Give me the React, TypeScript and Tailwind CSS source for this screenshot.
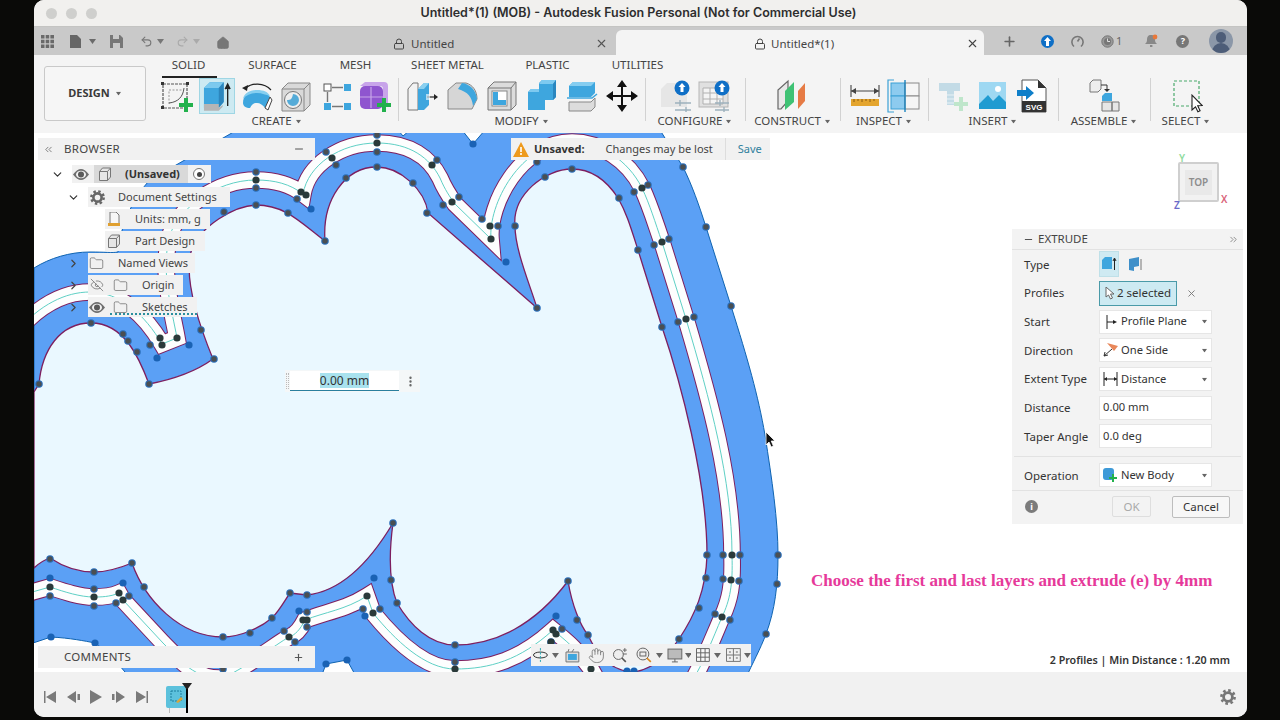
import { ReactNode } from "react";
import {
  ChevronDown,
  ChevronRight,
  ChevronsLeft,
  ChevronsRight,
  EyeOff,
  Folder,
  Hand,
  Home,
  Lock,
  Minus,
  MoreVertical,
  Plus,
  Redo2,
  Undo2,
  X,
} from "lucide-react";

const UI_FONT = "font-['Noto_Sans',sans-serif]";

function Caret({ className = "" }: { className?: string }) {
  return (
    <svg width="7" height="5" viewBox="0 0 7 5" className={className}>
      <path d="M0 0h7L3.5 5z" fill="currentColor" />
    </svg>
  );
}

function Ico({ children, w = 34 }: { children: ReactNode; w?: number }) {
  return (
    <svg width={w} height="34" viewBox={`0 0 ${w} 34`}>
      {children}
    </svg>
  );
}

function Gear({ size = 16, color = "#777", className = "" }: { size?: number; color?: string; className?: string }) {
  return (
    <svg width={size} height={size} viewBox="0 0 16 16" fill="none" stroke={color} className={className}>
      <circle cx="8" cy="8" r="4.4" strokeWidth="2.8" />
      <circle cx="8" cy="8" r="6.6" strokeWidth="2.6" strokeDasharray="2.6 2.58" />
    </svg>
  );
}

function EyeOpen({ className = "" }: { className?: string }) {
  return (
    <svg width="16" height="11" viewBox="0 0 16 11" className={className}>
      <path d="M0 5.5C3 1.5 5.5 0 8 0s5 1.5 8 5.5C13 9.500 10.500 11 8 11S3 9.500 0 5.500z" fill="#6e6e6e" />
      <ellipse cx="8" cy="5.500" rx="5" ry="3.800" fill="#f1f1f1" />
      <circle cx="8" cy="5.500" r="3" fill="#5a5a5a" />
    </svg>
  );
}

const greenPlus = (x: number, y: number, fill = "#22b14c") => (
  <path d={`M${x - 2} ${y - 7}h4v5h5v4h-5v5h-4v-5h-5v-4h5z`} fill={fill} />
);

const badge = (x: number, y: number) => (
  <g>
    <circle cx={x} cy={y} r="7.5" fill="#0f6fc6" />
    <path d={`M${x} ${y - 5}l3.5 4h-2v5h-3v-5h-2z`} fill="#fff" />
  </g>
);

const icons: Record<string, ReactNode> = {
  sketch: (
    <Ico>
      <rect x="2" y="5" width="24" height="24" fill="none" stroke="#555" strokeWidth="1.2" strokeDasharray="3 1" />
      <path d="M8 25V11h13" fill="none" stroke="#999" strokeDasharray="2 1.5" />
      <path d="M8 24c9-1 14-6 15-15" fill="none" stroke="#555" />
      <rect x="0" y="3" width="3" height="3" fill="#333" />
      <rect x="25" y="3" width="3" height="3" fill="#333" />
      <rect x="0" y="27" width="3" height="3" fill="#333" />
      {greenPlus(25, 26)}
    </Ico>
  ),
  extrude: (
    <Ico>
      <path d="M4 9l6-6h14v20l-5 6H4z" fill="#3ea6de" />
      <path d="M4 9l6-6h14l-5 6z" fill="#7cc9ee" />
      <path d="M19 9l5-6v20l-5 6z" fill="#2c86bd" />
      <path d="M4 25h15v4l4-3v2l-4 4H4z" fill="#b5b5b5" />
      <path d="M28 27V7M25.500 10L28 5l2.500 5" stroke="#222" strokeWidth="1.4" fill="#222" />
    </Ico>
  ),
  revolve: (
    <Ico>
      <path d="M3 24c0-8 6-12 14-12s11 3 13 6l-5 11c-2-3-5-5-8-5-3 0-5 1-7 5-4 0-7-2-7-5z" fill="#3ea6de" />
      <path d="M3 20c1-6 7-9 14-9s11 2 13 6c-4-1-8-3-13-3-6 0-11 2-14 6z" fill="#86cff0" />
      <path d="M25 29l5-11 2 3-4 10z" fill="#fff" stroke="#444" />
      <path d="M6 9c5-5 18-6 25 2" fill="none" stroke="#222" strokeWidth="1.2" />
      <path d="M2 9l6-3-1 6z" fill="#222" />
    </Ico>
  ),
  hole: (
    <Ico>
      <path d="M3 10l6-6h22v22l-6 6H3z" fill="#d9d9d9" stroke="#888" />
      <path d="M3 10h22v22M25 10l6-6" fill="none" stroke="#888" />
      <circle cx="14" cy="21" r="8.500" fill="#eee" stroke="#777" />
      <path d="M8 21a6 6 0 1 0 6-6c-1 5-2 6-6 6z" fill="#54abd8" />
    </Ico>
  ),
  pattern: (
    <Ico>
      <rect x="5" y="5" width="7" height="7" fill="#fff" stroke="#555" />
      <rect x="25" y="5" width="7" height="7" fill="#3ea6de" />
      <rect x="5" y="24" width="7" height="7" fill="#3ea6de" />
      <rect x="25" y="24" width="7" height="7" fill="#3ea6de" />
      <path d="M13 8.500h11M8.500 13v10M13 27.500h11" stroke="#777" strokeWidth="1.4" />
    </Ico>
  ),
  form: (
    <Ico>
      <rect x="2" y="7" width="23" height="23" rx="5" fill="#8f55cf" />
      <path d="M7 3h19a4 4 0 0 1 4 4v17l-5 3V10a3 3 0 0 0-3-3H2z" fill="#c8a4ea" />
      <path d="M2 18h23M13 8v21" stroke="#c7a6e8" strokeWidth="1.2" />
      {greenPlus(26, 26)}
    </Ico>
  ),
  press: (
    <Ico>
      <path d="M3 10l5-6h5v27H3z" fill="#f2f2f2" stroke="#777" />
      <path d="M13 10l6-6h5v22l-5 5h-6z" fill="#3ea6de" />
      <path d="M13 10l6-6h5l-5 6z" fill="#8ad0f0" />
      <path d="M22 18h9" stroke="#222" strokeWidth="1.2" />
      <path d="M29 15l4 3-4 3z" fill="#222" />
      <path d="M21 15h4v6h-4z" fill="#fff" opacity=".6" />
    </Ico>
  ),
  fillet: (
    <Ico>
      <path d="M3 11l8-7h10c7 2 11 8 11 16l-5 10H3z" fill="#d6d6d6" stroke="#888" />
      <path d="M17 4c8 1 14 7 15 16l-4 7c-1-9-5-14-15-17z" fill="#3ea6de" />
    </Ico>
  ),
  shell: (
    <Ico>
      <path d="M3 9l6-6h22v23l-5 5H3z" fill="#dcdcdc" stroke="#777" />
      <path d="M3 9h23v22M26 9l5-6" fill="none" stroke="#777" />
      <rect x="7" y="12" width="15" height="15" fill="#fff" stroke="#888" />
      <path d="M8 13h5v8h8v5H8z" fill="#3ea6de" />
    </Ico>
  ),
  combine: (
    <Ico>
      <path d="M14 4l3-3h14v17l-3 3h-8v10H3V13l3-3h8z" fill="#3ea6de" />
      <path d="M17 1h14l-3 4H14zM3 13l3-3h8v3z" fill="#7ecaf0" />
      <path d="M28 5l3-4v17l-3 3z" fill="#2a86bf" />
    </Ico>
  ),
  split: (
    <Ico>
      <path d="M4 7l4-4h22v11l-4 4H4z" fill="#3ea6de" />
      <path d="M4 7l4-4h22l-4 4z" fill="#85cdf0" />
      <path d="M4 23h22l4-4v9l-4 4H4z" fill="#dcdcdc" stroke="#888" />
      <path d="M2 19h25l5-4" fill="none" stroke="#3ea6de" strokeWidth="1.6" />
    </Ico>
  ),
  move: (
    <Ico>
      <path d="M17 4v26M4 17h26" stroke="#111" strokeWidth="2" />
      <path d="M17 1l5 7H12zM17 33l-5-7h10zM1 17l7-5v10zM33 17l-7 5V12z" fill="#111" />
    </Ico>
  ),
  params: (
    <Ico>
      <path d="M2 10l6-6h20v24H2z" fill="#e6e6e6" />
      <path d="M16 24h16M16 31h16" stroke="#9db1bd" strokeWidth="1.4" />
      <path d="M21 21v6M27 28v5" stroke="#9db1bd" strokeWidth="1.4" />
      {badge(23, 9)}
    </Ico>
  ),
  table: (
    <Ico>
      <rect x="2" y="3" width="29" height="25" fill="#e0e0e0" stroke="#b5b5b5" />
      <path d="M6 9h20v16H6zM13 9v16M20 9v16M6 14h20M6 20h20" fill="#f4f4f4" stroke="#b0b0b0" />
      <path d="M18 24h14M18 31h14M23 21v6M27 28v5" stroke="#9db1bd" strokeWidth="1.4" />
      {badge(25, 9)}
    </Ico>
  ),
  construct: (
    <Ico w={34}>
      <path d="M2 30V11L12 2v20l-7 8z" fill="#e8e8e8" stroke="#666" strokeWidth="1.2" />
      <path d="M9 31V12l9-9v20z" fill="#3fc274" />
      <path d="M22 30V12l7-8v18z" fill="#e67b45" />
    </Ico>
  ),
  measure: (
    <Ico>
      <path d="M3 6v12M31 6v12M3 12h28" stroke="#444" strokeWidth="1.1" />
      <path d="M3 12l5-3v6zM31 12l-5-3v6z" fill="#444" />
      <rect x="3" y="20" width="28" height="7" fill="#e4a52e" />
      <path d="M6 20v3M10 20v2M14 20v3M18 20v2M22 20v3M26 20v2" stroke="#8a5b10" />
    </Ico>
  ),
  section: (
    <Ico>
      <rect x="4" y="4" width="14" height="13" fill="#8dcbef" stroke="#3aa0d5" />
      <rect x="4" y="17" width="14" height="13" fill="#8dcbef" stroke="#3aa0d5" />
      <rect x="18" y="4" width="14" height="13" fill="#f5f5f5" stroke="#888" />
      <rect x="18" y="17" width="14" height="13" fill="#f5f5f5" stroke="#888" />
      <path d="M18 1v32" stroke="#1d86c0" strokeWidth="1.4" />
      <path d="M7 1H1v32h6" fill="none" stroke="#3aa0d5" strokeWidth="1.2" />
    </Ico>
  ),
  bolt: (
    <Ico>
      <path d="M3 4h21v8h-6v14h-7V12H3z" fill="#c3dbe6" />
      <path d="M11 16h7M11 20h7M11 24h7" stroke="#e8f2f6" />
      {greenPlus(25, 25, "#bfe6cb")}
    </Ico>
  ),
  image: (
    <Ico>
      <rect x="3" y="3" width="27" height="27" fill="#1f9bd1" />
      <path d="M3 3h27v20l-7-7-6 6-5-6-9 9z" fill="#9ed8f2" />
      <circle cx="22" cy="10" r="3" fill="#fff" />
    </Ico>
  ),
  svgFile: (
    <Ico>
      <path d="M6 1h16l8 8v24H6z" fill="#fff" stroke="#555" />
      <path d="M22 1v8h8z" fill="#333" />
      <path d="M1 11h9V7l8 7-8 7v-4H1z" fill="#0f7fc9" />
      <rect x="6" y="22" width="24" height="11" fill="#333" />
      <text x="18" y="31" textAnchor="middle" fontSize="8" fontWeight="700" fill="#fff" fontFamily="Liberation Sans, sans-serif">SVG</text>
    </Ico>
  ),
  assemble: (
    <Ico>
      <path d="M3 4l3-3h8v9l-3 3H3z" fill="#eee" stroke="#777" />
      <path d="M14 6h6v5" fill="none" stroke="#333" />
      <path d="M17 10l3 3 3-3z" fill="#333" />
      <path d="M15 17l3-3h7v8h-10z" fill="#3ea6de" />
      <path d="M15 23h10v9H15zM25 23h7v9h-7z" fill="#e6e6e6" stroke="#777" />
    </Ico>
  ),
  select: (
    <Ico>
      <rect x="5" y="2" width="25" height="25" fill="none" stroke="#49a86a" strokeWidth="1.2" strokeDasharray="3 2" />
      <path d="M24 17v15l3.500-3.200 2.400 5 2.200-1-2.400-5 4.500-.3z" fill="#fff" stroke="#222" strokeWidth="1.1" transform="translate(-1 -1)" />
    </Ico>
  ),
};

type Group = { label: string; width: string; slot: string; tools: string[] };

const groups: Group[] = [
  { label: "CREATE", width: "w-[243px]", slot: "w-[39.6px]", tools: ["sketch", "extrude", "revolve", "hole", "pattern", "form"] },
  { label: "MODIFY", width: "w-[247px]", slot: "w-[40px]", tools: ["press", "fillet", "shell", "combine", "split", "move"] },
  { label: "CONFIGURE", width: "w-[100px]", slot: "w-[38px]", tools: ["params", "table"] },
  { label: "CONSTRUCT", width: "w-[95px]", slot: "w-[38px]", tools: ["construct"] },
  { label: "INSPECT", width: "w-[88px]", slot: "w-[39px]", tools: ["measure", "section"] },
  { label: "INSERT", width: "w-[130px]", slot: "w-[40px]", tools: ["bolt", "image", "svgFile"] },
  { label: "ASSEMBLE", width: "w-[92px]", slot: "w-[38px]", tools: ["assemble"] },
  { label: "SELECT", width: "w-[72px]", slot: "w-[38px]", tools: ["select"] },
];

const ribbonTabs = [
  { label: "SOLID", w: "w-[67px]" },
  { label: "SURFACE", w: "w-[101px]" },
  { label: "MESH", w: "w-[65px]" },
  { label: "SHEET METAL", w: "w-[119px]" },
  { label: "PLASTIC", w: "w-[81px]" },
  { label: "UTILITIES", w: "w-[99px]" },
];

function TitleBar() {
  return (
    <div className="relative flex h-[27px] shrink-0 items-center justify-center border-b border-[#c4c4c2] bg-[#f1f0ee]">
      <div className="absolute left-[12px] top-[8px] flex gap-[9px]">
        <span className="h-[11px] w-[11px] rounded-full bg-[#cfcfcd]" />
        <span className="h-[11px] w-[11px] rounded-full bg-[#cfcfcd]" />
        <span className="h-[11px] w-[11px] rounded-full bg-[#cfcfcd]" />
      </div>
      <span className="ml-[-4px] font-['Inter',sans-serif] text-[12.5px] font-semibold text-[#2e2e2e]">
        Untitled*(1) (MOB) - Autodesk Fusion Personal (Not for Commercial Use)
      </span>
    </div>
  );
}

function TabBar() {
  return (
    <div className={`flex h-[28px] shrink-0 items-stretch bg-[#c9c9c9] text-[#444] ${UI_FONT}`}>
      <div className="flex w-[222px] items-center pl-[7px] text-[#6a6a6a]">
        <svg width="13" height="13" viewBox="0 0 13 13" fill="#6a6a6a">
          <path d="M0 0h3.500v3.500H0zM4.700 0h3.500v3.500H4.700zM9.400 0H13v3.500H9.400zM0 4.700h3.500v3.500H0zM4.700 4.700h3.500v3.500H4.700zM9.400 4.700H13v3.500H9.400zM0 9.400h3.500V13H0zM4.700 9.400h3.500V13H4.700zM9.400 9.400H13V13H9.400z" />
        </svg>
        <svg width="11" height="13" viewBox="0 0 11 13" fill="#666" className="ml-[16px]">
          <path d="M0 0h7l4 4v9H0z" />
        </svg>
        <Caret className="ml-[8px]" />
        <svg width="13" height="13" viewBox="0 0 13 13" className="ml-[14px]">
          <path d="M0 0h10l3 3v10H0z" fill="#777" />
          <path d="M3 0h6v4H3zM3 8h7v5H3z" fill="#c9c9c9" />
        </svg>
        <Undo2 size={13} strokeWidth={2} className="ml-[17px] text-[#777]" />
        <Caret className="ml-[4px] text-[#777]" />
        <Redo2 size={13} strokeWidth={2} className="ml-[12px] text-[#aaa]" />
        <Caret className="ml-[4px] text-[#aaa]" />
        <Home size={14} fill="#777" strokeWidth={1.5} className="ml-[16px] mt-[4px] text-[#777]" />
      </div>
      <div className="flex w-[360px] items-center pl-[137px] pt-[5px] text-[11.5px]">
        <Lock size={12} className="mr-[6px]" />
        <span>Untitled</span>
        <X size={13} className="ml-auto mr-[8px] text-[#555]" />
      </div>
      <div className="mt-[3px] flex w-[368px] items-center rounded-t-md bg-[#f4f4f4] pl-[138px] pt-[2px] text-[11.5px]">
        <Lock size={12} className="mr-[5px]" />
        <span>Untitled*(1)</span>
        <X size={13} className="ml-auto mr-[5px] text-[#444]" />
      </div>
      <div className="flex flex-1 items-center text-[#666]">
        <Plus size={15} strokeWidth={2.6} className="ml-[18px]" />
        <span className="ml-[24px] flex h-[13px] w-[13px] items-center justify-center rounded-full bg-[#0f6fc6]">
          <svg width="7" height="9" viewBox="0 0 7 9" fill="#fff"><path d="M3.500 0L7 4H5v5H2V4H0z" /></svg>
        </span>
        <svg width="13" height="13" viewBox="0 0 13 13" fill="none" stroke="#777" strokeWidth="1.6" className="ml-[17px]">
          <path d="M3 11.500a5.600 5.600 0 1 1 7 0" />
          <path d="M6.500 6.500l2-3" />
        </svg>
        <svg width="13" height="13" viewBox="0 0 13 13" className="ml-[17px]">
          <circle cx="6.500" cy="6.500" r="5.700" fill="#999" stroke="#777" />
          <circle cx="6.500" cy="6.500" r="3.500" fill="#777" />
          <path d="M6.500 3.500v3h2.500" stroke="#ddd" fill="none" />
        </svg>
        <span className="ml-[2px] text-[11px]">1</span>
        <svg width="13" height="14" viewBox="0 0 13 14" className="ml-[23px]" fill="#888">
          <path d="M6 1c3 0 4 2 4 5 0 2 1 3 2 4H0c1-1 2-2 2-4 0-3 1-5 4-5zM5 11h2.400v2H5z" />
          <circle cx="10" cy="3" r="2.400" fill="#e9783a" />
        </svg>
        <span className="ml-[18px] flex h-[13px] w-[13px] items-center justify-center rounded-full bg-[#777] text-[9px] font-bold text-white">?</span>
        <span className="relative ml-[20px] h-[24px] w-[24px] overflow-hidden rounded-full bg-[#8b97a8]">
          <span className="absolute left-[7px] top-[3px] h-[11px] w-[10px] rounded-full bg-[#4d5d78]" />
          <span className="absolute left-[3px] top-[14px] h-[12px] w-[18px] rounded-t-full bg-[#4d5d78]" />
        </span>
      </div>
    </div>
  );
}

function Ribbon() {
  return (
    <div className={`flex h-[78px] shrink-0 bg-[#f4f4f4] text-[#444] ${UI_FONT}`}>
      <div className="ml-[10px] mt-[11px] flex h-[55px] w-[102px] items-center justify-center rounded-[3px] border border-[#c9c9c9] bg-[#f6f6f6] text-[11px] font-bold text-[#3a3a3a]">
        DESIGN
        <Caret className="ml-[5px] scale-75 text-[#666]" />
      </div>
      <div className="ml-[9px] flex flex-col">
        <div className="flex h-[20px] items-start pt-[2px] text-[11.5px] leading-[16px]">
          {ribbonTabs.map((t, i) => (
            <div key={t.label} className={`relative h-[18px] text-center ${t.w}`}>
              {t.label}
              {i === 0 && <span className="absolute left-[7px] top-[19px] h-[2px] w-[55px] bg-[#222]" />}
            </div>
          ))}
        </div>
        <div className="flex">
          {groups.map((g, i) => (
            <div key={g.label} className={`relative flex flex-col items-center ${g.width}`}>
              {i > 0 && <span className="absolute bottom-[7px] left-0 top-[3px] w-px bg-[#d2d2d2]" />}
              <div className="flex h-[41px] items-center justify-center">
                {g.tools.map((name) => (
                  <div
                    key={name}
                    className={`relative flex h-[36px] items-center justify-center ${
                      name === "extrude" ? "mx-[2px] w-[35.6px] border border-[#9fd6e4] bg-[#cdeaf2]" : g.slot
                    }`}
                  >
                    {icons[name]}
                  </div>
                ))}
              </div>
              <div className="mt-[-2px] flex h-[14px] items-center gap-[3px] text-[11.5px] leading-none">
                {g.label}
                <Caret className="scale-75 text-[#666]" />
              </div>
            </div>
          ))}
        </div>
      </div>
    </div>
  );
}

const edgeDots = [
  [39,384],[149,384],[214,359],[137,352],[123,334],[91,323],[201,330],[325,241],[288,213],[256,205],[224,212],[297,199],[256,188],[256,172],
  [346,178],[377,167],[377,152],[377,135],[336,165],[326,152],[413,183],[427,213],[437,160],[443,205],[459,197],[482,219],[498,226],[515,226],
  [537,308],[545,177],[572,169],[537,162],[619,198],[634,192],[648,185],[638,250],[654,245],[669,239],[683,167],[706,227],[731,306],[662,327],
  [678,322],[694,317],[707,555],[723,555],[740,555],[778,555],[706,578],[723,579],[739,581],[777,584],[699,608],[715,614],[730,620],[766,634],
  [679,639],[568,581],[562,629],[577,620],[588,635],[551,642],[455,645],[455,662],[50,559],[94,572],[132,563],[144,587],[50,596],[94,589],[94,606],
  [129,596],[116,603],[223,637],[250,633],[272,618],[290,593],[307,595],[393,523],[391,580],[397,603],[363,609],[380,609],[307,612],[307,627],
  [284,631],[295,642],[223,669],[150,345],[128,341],
];
const blueDots = [
  [157,358],[189,345],[311,209],[506,262],[473,144],[556,616],[50,578],[123,583],[51,637],[95,643],[374,578],[365,616],[299,611],[326,664],[347,660],[627,671],[634,671],
];
const centerDots = [
  [256,180],[301,192],[306,195],[377,143],[332,158],[432,165],[452,202],[490,226],[491,239],[642,188],[662,242],[686,319],[732,555],[731,580],[722,617],
  [553,630],[556,634],[455,669],[591,669],[50,587],[94,597],[119,593],[123,600],[367,596],[373,613],[303,620],[307,620],[289,637],[162,345],[177,338],[160,338],[551,642],
];

const RING =
  "M18 330C40 305 65 292 90 292C120 292 145 315 162 344L177 338C172 310 160 270 170 235C178 210 215 180 256 180C275 180 290 184 303 194C308 165 340 143 377 143C410 143 430 158 440 178C445 190 450 197 455 204L491 239C488 205 520 142 572 142C600 142 628 160 642 188C650 205 655 222 662 242L686 319C710 400 732 480 732 555C733 585 730 600 722 617C712 640 705 660 690 685L600 685L591 669C578 650 565 640 553 630C520 660 490 669 455 669C425 669 395 640 373 613L367 596C345 610 325 612 305 620C300 630 295 635 289 637C275 645 250 665 223 678C195 680 180 660 163 643L123 600L119 593C110 597 100 597 94 597C80 597 65 592 50 587L18 596";

const INNER =
  "M34 568C38 564 44 560 50 558C65 568 80 572 94 572C108 572 120 568 132 563C145 600 180 637 223 637C240 637 260 628 272 618C280 610 285 600 290 593L307 595C335 592 365 570 393 523C388 560 390 585 397 603C410 625 430 645 455 645C495 645 535 625 568 581C572 605 580 625 588 635C595 650 605 668 630 672C650 672 668 655 679 639C695 615 706 590 707 555C707 480 680 380 662 327L638 250C630 225 626 212 618 198C605 178 590 169 572 169C545 169 512 195 515 226C515 250 530 285 537 308L428 213C425 190 400 167 377 167C345 167 322 200 325 241C300 222 285 205 256 205C235 206 200 225 191 252C185 275 195 315 213 359C195 372 170 380 149 384C140 360 125 323 91 323C60 323 42 350 39 384L34 392Z";

const OUTER =
  "M237 130L660 130L683 167C692 185 699 205 706 227L731 306C748 360 758 395 765 435C772 480 778 520 778 555C778 585 775 610 766 634C760 650 753 662 745 680L34 680L34 268C50 258 70 252 90 252C105 252 112 253 118 252C120 225 135 195 150 180Z";

function Model() {
  return (
    <svg viewBox="34 133 1213 539" className="absolute inset-0 h-full w-full">
      <rect x="34" y="133" width="1213" height="539" fill="#fff" />
      <path d={OUTER} fill="#5ba0f5" stroke="#0f63b0" />
      <path d="M33 643L51 637C70 638 85 641 95 643C105 650 115 660 125 672L125 680L33 680ZM320 680L326 664L347 660L358 680ZM462 130L473 144L485 130ZM398 130L403 136L410 130Z" fill="#fff" stroke="#0f63b0" />
      <path d={INNER} fill="#eaf8ff" stroke="#7d1f5f" strokeWidth="1.3" />
      <path d={RING} fill="none" stroke="#7d1f5f" strokeWidth="17.6" strokeMiterlimit="4" />
      <path d={RING} fill="none" stroke="#fdfefe" strokeWidth="15.6" strokeMiterlimit="4" />
      <path d={RING} fill="none" stroke="#5fd0c5" strokeWidth="1" />
      {blueDots.map(([x, y], i) => (
        <circle key={`b${i}`} cx={x} cy={y} r="3.600" fill="#1a62b4" />
      ))}
      {edgeDots.map(([x, y], i) => (
        <g key={`e${i}`}>
          <circle cx={x} cy={y} r="3.800" fill="#2b6fbb" />
          <circle cx={x} cy={y} r="2.700" fill="#4a4f52" />
        </g>
      ))}
      {centerDots.map(([x, y], i) => (
        <circle key={`c${i}`} cx={x} cy={y} r="3.600" fill="#2a3a3a" />
      ))}
    </svg>
  );
}

function Cube({ size = 14 }: { size?: number }) {
  return (
    <svg width={size} height={size} viewBox="0 0 14 14" fill="none" stroke="#777">
      <path d="M1.500 4.500l3-3.500h8v9l-3 3.500h-8zM1.500 4.500h8v9M9.500 4.500l3-3.500" fill="#e6e6e6" />
    </svg>
  );
}

function Chip({ indent, width, children, chevron }: { indent: string; width: string; children: ReactNode; chevron?: "open" | "closed" }) {
  return (
    <div className={`relative flex h-[20px] items-center bg-[#f1f1f1] ${indent} ${width}`}>
      {chevron === "open" && <ChevronDown size={13} strokeWidth={2.2} className="absolute left-[-21px] text-[#333]" />}
      {chevron === "closed" && <ChevronRight size={13} strokeWidth={2.2} className="absolute left-[-21px] text-[#444]" />}
      {children}
    </div>
  );
}

function BrowserTree() {
  return (
    <div className={`absolute left-[4px] top-[5px] w-[277px] text-[11px] text-[#444] ${UI_FONT}`}>
      <div className="flex h-[22px] items-center bg-[#f1f1f1] pl-[5px]">
        <ChevronsLeft size={11} className="text-[#777]" />
        <span className="ml-[10px] text-[11.5px] tracking-wide">BROWSER</span>
        <Minus size={12} className="ml-auto mr-[10px] text-[#555]" />
      </div>
      <div className="mt-[5px] flex flex-col gap-[2px]">
        <div className="relative mb-[2px] ml-[34px] flex h-[18px] w-[139px] items-center bg-[#f1f1f1]">
          <ChevronDown size={13} strokeWidth={2.2} className="absolute left-[-21px] text-[#333]" />
          <EyeOpen className="ml-[1px]" />
          <div className="ml-[5px] flex h-full w-[94px] items-center bg-[#d9d9d9] pl-[4px]">
            <Cube />
            <span className="ml-[13px] font-bold text-[#333]">(Unsaved)</span>
          </div>
          <span className="ml-[5px] flex h-[12px] w-[12px] items-center justify-center rounded-full border border-[#777] bg-white">
            <span className="h-[5px] w-[5px] rounded-full bg-[#444]" />
          </span>
        </div>
        <Chip indent="ml-[50px]" width="w-[142px]" chevron="open">
          <Gear size={15} color="#666" className="ml-[2px]" />
          <span className="ml-[13px]">Document Settings</span>
        </Chip>
        <Chip indent="ml-[67px]" width="w-[105px]">
          <svg width="14" height="14" viewBox="0 0 14 14" className="ml-[2px]">
            <path d="M3 0h6l3 3v9H3z" fill="#f7f7f7" stroke="#777" />
            <rect x="1" y="11" width="12" height="3" fill="#e0a030" />
          </svg>
          <span className="ml-[14px]">Units: mm, g</span>
        </Chip>
        <Chip indent="ml-[67px]" width="w-[100px]">
          <span className="ml-[2px]"><Cube /></span>
          <span className="ml-[14px]">Part Design</span>
        </Chip>
        <Chip indent="ml-[50px]" width="w-[107px]" chevron="closed">
          <Folder size={15} strokeWidth={1} className="ml-[1px] text-[#555]" />
          <span className="ml-[14px]">Named Views</span>
        </Chip>
        <Chip indent="ml-[50px]" width="w-[95px]" chevron="closed">
          <EyeOff size={14} strokeWidth={1.4} className="ml-[2px] text-[#777]" />
          <Folder size={15} strokeWidth={1} className="ml-[9px] text-[#555]" />
          <span className="ml-[14px]">Origin</span>
        </Chip>
        <Chip indent="ml-[50px]" width="w-[109px]" chevron="closed">
          <EyeOpen className="ml-[1px]" />
          <Folder size={15} strokeWidth={1} className="ml-[8px] text-[#555]" />
          <span className="ml-[14px]">Sketches</span>
          <span className="absolute bottom-[2px] left-[22px] right-0 border-b-2 border-dotted border-[#2b8f9e]" />
        </Chip>
      </div>
    </div>
  );
}

function UnsavedBar() {
  return (
    <div className={`absolute left-[477px] top-[5px] flex h-[22px] w-[259px] items-center whitespace-nowrap bg-[#f1f1f1] text-[11px] text-[#444] ${UI_FONT}`}>
      <svg width="16" height="15" viewBox="0 0 16 15" className="ml-[2px]">
        <path d="M8 0l8 15H0z" fill="#ee9a1d" />
        <path d="M7.200 5h1.600v5H7.200zM7.200 11h1.600v2H7.200z" fill="#fff" />
      </svg>
      <span className="ml-[5px] font-bold text-[#333]">Unsaved:</span>
      <span className="ml-[21px]">Changes may be lost</span>
      <span className="ml-[12px] h-full w-px bg-[#ddd]" />
      <span className="ml-[12px] text-[#2f7f9d]">Save</span>
    </div>
  );
}

function DistanceInput() {
  return (
    <div className={`absolute left-[251px] top-[237px] flex h-[22px] w-[135px] items-center bg-[#f4f7f8] ${UI_FONT}`}>
      <span className="ml-[1px] h-[16px] w-[3px] border-x border-dotted border-[#bbb]" />
      <div className="ml-[1px] flex h-[20px] w-[109px] items-center justify-center border-b border-[#2a7f9e] bg-white text-[12px] text-[#333]">
        <span className="bg-[#a9e2ee] leading-[15px]">0.00 mm</span>
      </div>
      <MoreVertical size={13} strokeWidth={2.4} className="ml-[5px] text-[#666]" />
    </div>
  );
}

function ViewCube() {
  return (
    <div className={`absolute left-[1140px] top-[18px] h-[60px] w-[60px] ${UI_FONT}`}>
      <span className="absolute left-[5px] top-0 text-[10px] font-semibold text-[#8fdc9e]">Y</span>
      <div className="absolute left-[4px] top-[11px] flex h-[40px] w-[41px] items-center justify-center rounded-[2px] border-2 border-[#cfcfcf] bg-[#f2f2f2] text-[10px] font-semibold text-[#8d8d8d]">
        <span className="bg-[#e9e9e9] px-[4px] py-[5px]">TOP</span>
      </div>
      <span className="absolute left-[47px] top-[41px] text-[10px] font-semibold text-[#d9637a]">X</span>
      <span className="absolute left-0 top-[47px] text-[10px] font-semibold text-[#6a6ac9]">Z</span>
    </div>
  );
}

function Field({ icon, text, caret = true }: { icon?: ReactNode; text: string; caret?: boolean }) {
  return (
    <div className="flex h-[24px] w-[113px] items-center border border-[#e6e6e6] bg-white pl-[3px] pr-[3px] text-[#333]">
      {icon && <span className="mr-[3px] flex w-[15px] justify-center">{icon}</span>}
      <span className="text-[11.2px]">{text}</span>
      {caret && <Caret className="ml-auto scale-75 text-[#666]" />}
    </div>
  );
}

function Row({ label, children }: { label: string; children: ReactNode }) {
  return (
    <div className="flex h-[28.7px] items-center pl-[12px]">
      <span className="w-[75px] text-[#333]">{label}</span>
      {children}
    </div>
  );
}

function ExtrudePanel() {
  return (
    <div className={`absolute right-[4px] top-[96px] h-[295px] w-[231px] bg-[#f3f3f3] text-[11.5px] ${UI_FONT}`}>
      <div className="flex h-[21px] items-center border-b border-[#e2e2e2] pl-[11px] text-[#444]">
        <Minus size={11} strokeWidth={2} />
        <span className="ml-[4px]">EXTRUDE</span>
        <ChevronsRight size={11} className="ml-auto mr-[4px] text-[#888]" />
      </div>
      <Row label="Type">
        <span className="flex h-[26px] w-[20px] items-center justify-center border border-[#bfe0e8] bg-[#cfeaf2]">
          <svg width="15" height="16" viewBox="0 0 15 16">
            <path d="M0 4l3-3h7v12H0z" fill="#3ea6de" />
            <path d="M12.500 14V3M11 5l1.500-3L14 5" stroke="#222" fill="none" />
          </svg>
        </span>
        <svg width="15" height="16" viewBox="0 0 15 16" className="ml-[9px]">
          <path d="M1 3l10-2v9l-5 1v4L1 14z" fill="#3e8fc9" />
          <path d="M13 14V3" stroke="#777" />
        </svg>
      </Row>
      <Row label="Profiles">
        <span className="flex h-[25px] w-[78px] items-center justify-center gap-[2px] border border-[#4a9aa8] bg-[#cdeaf2] text-[#333]">
          <svg width="10" height="13" viewBox="0 0 10 13">
            <path d="M1 0v10l2.500-2 2 4 2-1-2-4H9z" fill="#fff" stroke="#666" />
          </svg>
          2 selected
        </span>
        <X size={11} className="ml-[9px] text-[#777]" />
      </Row>
      <Row label="Start">
        <Field
          text="Profile Plane"
          icon={
            <svg width="12" height="14" viewBox="0 0 12 14">
              <path d="M2 0v14M2 7h8" stroke="#222" />
              <path d="M12 7L8 5v4z" fill="#222" />
            </svg>
          }
        />
      </Row>
      <Row label="Direction">
        <Field
          text="One Side"
          icon={
            <svg width="15" height="14" viewBox="0 0 15 14">
              <path d="M4 0l11 3-4 5z" fill="#e8875a" />
              <path d="M9 6L1 13M1 13l1-4M1 13l4-1" stroke="#333" fill="none" />
            </svg>
          }
        />
      </Row>
      <Row label="Extent Type">
        <Field
          text="Distance"
          icon={
            <svg width="15" height="14" viewBox="0 0 15 14">
              <path d="M1 0v14M14 0v14M1 7h13" stroke="#222" />
              <path d="M1 7l3-2v4zM14 7l-3-2v4z" fill="#222" />
            </svg>
          }
        />
      </Row>
      <Row label="Distance">
        <Field text="0.00 mm" caret={false} />
      </Row>
      <Row label="Taper Angle">
        <Field text="0.0 deg" caret={false} />
      </Row>
      <div className="mx-[2px] mt-[5px] border-t border-[#e2e2e2]" />
      <div className="mt-[4px]">
        <Row label="Operation">
          <Field
            text="New Body"
            icon={
              <svg width="15" height="15" viewBox="0 0 15 15">
                <rect x="0" y="0" width="11" height="12" rx="3" fill="#3e9ad8" />
                <path d="M9 6h2v3h3v2h-3v3H9v-3H6V9h3z" fill="#22b14c" />
              </svg>
            }
          />
        </Row>
      </div>
      <div className="flex h-[33px] items-center border-t border-[#e2e2e2]">
        <span className="ml-[13px] flex h-[13px] w-[13px] items-center justify-center rounded-full bg-[#7b7b7b] text-[9px] font-bold text-white">i</span>
        <span className="ml-[74px] flex h-[21px] w-[39px] items-center justify-center rounded-[2px] border border-[#dedede] text-[#a9a9a9]">OK</span>
        <span className="ml-[21px] flex h-[22px] w-[58px] items-center justify-center rounded-[2px] border border-[#bdbdbd] bg-[#f7f7f7] text-[#333]">Cancel</span>
      </div>
    </div>
  );
}

function NavBar() {
  return (
    <div className="absolute left-[497px] top-[511px] flex h-[22px] w-[220px] items-center bg-[#f1f1f1] pl-[2px] text-[#666]">
      <svg width="15" height="16" viewBox="0 0 15 16">
        <ellipse cx="7.500" cy="8" rx="7" ry="3" fill="none" stroke="#333" />
        <path d="M7.500 1v14" stroke="#2aa6b0" strokeDasharray="2.500 1.500" />
      </svg>
      <Caret className="ml-[4px]" />
      <svg width="15" height="15" viewBox="0 0 15 15" className="ml-[6px]">
        <path d="M1 4h13v10H1z" fill="#ddd" stroke="#777" />
        <path d="M3 6h9v6H3z" fill="#3ea6de" />
        <path d="M3 4l1-3M7 4l2-3" stroke="#777" />
      </svg>
      <Hand size={17} strokeWidth={1.2} className="ml-[8px] text-[#777]" />
      <svg width="17" height="16" viewBox="0 0 17 16" className="ml-[8px]">
        <circle cx="6.500" cy="7.500" r="5" fill="#eee" stroke="#666" />
        <path d="M10 11l4 4" stroke="#555" strokeWidth="1.600" />
        <path d="M13 1v4M11 3h4M11 7h4" stroke="#666" />
      </svg>
      <svg width="17" height="16" viewBox="0 0 17 16" className="ml-[7px]">
        <circle cx="7" cy="7" r="6" fill="#eee" stroke="#666" />
        <rect x="4" y="5" width="6" height="4" fill="none" stroke="#666" />
        <path d="M11 11l4 4" stroke="#d9861c" strokeWidth="1.600" />
      </svg>
      <Caret className="ml-[3px]" />
      <svg width="16" height="15" viewBox="0 0 16 15" className="ml-[4px]">
        <rect x="1" y="1" width="14" height="10" fill="#bbb" stroke="#666" />
        <path d="M5 14h6M8 11v3" stroke="#666" />
      </svg>
      <Caret className="ml-[2px]" />
      <svg width="14" height="14" viewBox="0 0 14 14" className="ml-[5px]">
        <path d="M.5.5h13v13H.5zM4.800.5v13M9.200.5v13M.5 4.800h13M.5 9.200h13" fill="#f7f7f7" stroke="#666" />
      </svg>
      <Caret className="ml-[4px]" />
      <svg width="15" height="14" viewBox="0 0 15 14" className="ml-[5px]">
        <path d="M.5.5h14v13H.5zM7.500.5v13M.5 7h14" fill="#f1f1f1" stroke="#777" />
        <path d="M3 3h2v2H3zM10 3h2v2h-2zM3 9h2v2H3zM10 9h2v2h-2z" fill="#aaa" />
      </svg>
      <Caret className="ml-[3px]" />
    </div>
  );
}

function CommentsBar() {
  return (
    <div className={`absolute left-[4px] top-[513px] flex h-[22px] w-[277px] items-center bg-[#f1f1f1] pl-[26px] text-[11.5px] tracking-wide text-[#444] ${UI_FONT}`}>
      COMMENTS
      <Plus size={11} strokeWidth={2.4} className="ml-auto mr-[11px] text-[#555]" />
    </div>
  );
}

function Timeline() {
  return (
    <div className="flex h-[45px] shrink-0 items-center bg-[#f1f1f1] pt-[4px] text-[#7a7a7a]">
      <div className="ml-[10px] flex items-center gap-[10px]">
        <svg width="12" height="12" viewBox="0 0 12 12" fill="currentColor"><path d="M0 0h1.500v12H0zM12 0v12L2 6z" /></svg>
        <svg width="13" height="12" viewBox="0 0 13 12" fill="currentColor" className="ml-[1px]"><path d="M9 0v12L0 6zM10.500 3H13v6h-2.500z" /></svg>
        <svg width="12" height="14" viewBox="0 0 12 14" fill="currentColor"><path d="M0 0l12 7-12 7z" /></svg>
        <svg width="13" height="12" viewBox="0 0 13 12" fill="currentColor"><path d="M4 0v12l9-6zM0 3h2.500v6H0z" /></svg>
        <svg width="12" height="12" viewBox="0 0 12 12" fill="currentColor" className="ml-[1px]"><path d="M0 0l10 6-10 6zM10.500 0H12v12h-1.500z" /></svg>
      </div>
      <div className="relative ml-[18px] flex h-[22px] w-[21px] items-center justify-center rounded-[2px] bg-[#5cc1dc]">
        <svg width="15" height="15" viewBox="0 0 15 15">
          <rect x="2" y="2" width="10" height="10" fill="none" stroke="#1d7f9e" strokeDasharray="2 1" />
          <path d="M7 13l5-5 2 2-5 4z" fill="#d9a63a" />
        </svg>
        <span className="absolute left-[3px] top-[22px] h-[5px] w-px bg-[#bbb]" />
        <span className="absolute right-[-1px] top-[-1px] h-[28px] w-[2px] bg-black" />
        <span className="absolute right-[-5px] top-[-3px] h-0 w-0 border-x-[5px] border-t-[7px] border-x-transparent border-t-[#222]" />
      </div>
      <Gear size={16} color="#777" className="ml-auto mr-[11px]" />
    </div>
  );
}

export default function App() {
  return (
    <div className="relative h-[720px] w-[1280px] overflow-hidden bg-[#0a0a08]">
      <div className="ml-[34px] flex h-[717px] w-[1213px] flex-col overflow-hidden rounded-[10px] bg-white">
        <TitleBar />
        <TabBar />
        <Ribbon />
        <div className="relative flex-1 overflow-hidden bg-white">
          <Model />
          <BrowserTree />
          <UnsavedBar />
          <DistanceInput />
          <ViewCube />
          <ExtrudePanel />
          <NavBar />
          <CommentsBar />
          {/* cursor over the part edge */}
          <svg width="12" height="18" viewBox="0 0 12 18" className="absolute left-[731px] top-[298px]">
            <path d="M1 1v13l3-3 2.200 5 2.200-1-2.200-5H10z" fill="#111" stroke="#fff" strokeWidth=".8" />
          </svg>
          <p className="absolute left-[777px] top-[435px] whitespace-nowrap font-['Liberation_Serif',serif] text-[17px] font-bold text-[#e6399a]">
            Choose the first and last layers and extrude (e) by 4mm
          </p>
          <p className={`absolute right-[17px] top-[519px] text-[10.7px] font-semibold text-[#333] ${UI_FONT}`}>
            2 Profiles | Min Distance : 1.20 mm
          </p>
        </div>
        <Timeline />
      </div>
    </div>
  );
}
